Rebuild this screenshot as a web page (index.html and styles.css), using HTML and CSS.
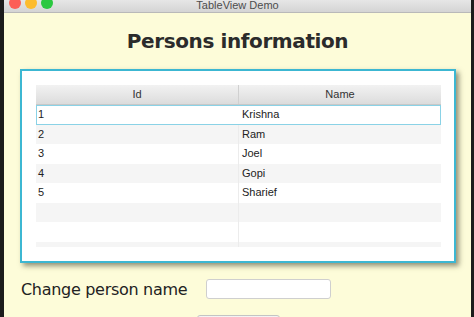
FILE: index.html
```html
<!DOCTYPE html>
<html lang="en">
<head>
    <meta charset="UTF-8">
    <title>TableView Demo</title>
    <link rel="stylesheet" href="styles.css">
</head>
<body>
    <div class="window">
        <div class="titlebar">
            <div class="lights">
                <span class="light red"></span>
                <span class="light yellow"></span>
                <span class="light green"></span>
            </div>
            <div class="title">TableView Demo</div>
        </div>

        <div class="content">
            <h1>Persons information</h1>

            <div class="panel">
                <div class="table">
                    <div class="row head">
                        <div class="cell">Id</div>
                        <div class="cell">Name</div>
                    </div>
                    <div class="body">
                        <div class="row selected">
                            <div class="cell">1</div>
                            <div class="cell">Krishna</div>
                        </div>
                        <div class="row">
                            <div class="cell">2</div>
                            <div class="cell">Ram</div>
                        </div>
                        <div class="row">
                            <div class="cell">3</div>
                            <div class="cell">Joel</div>
                        </div>
                        <div class="row">
                            <div class="cell">4</div>
                            <div class="cell">Gopi</div>
                        </div>
                        <div class="row">
                            <div class="cell">5</div>
                            <div class="cell">Sharief</div>
                        </div>
                        <div class="row empty">
                            <div class="cell"></div>
                            <div class="cell"></div>
                        </div>
                        <div class="row empty">
                            <div class="cell"></div>
                            <div class="cell"></div>
                        </div>
                        <div class="row empty">
                            <div class="cell"></div>
                            <div class="cell"></div>
                        </div>
                    </div>
                </div>
            </div>

            <div class="form-row">
                <label for="person-name">Change person name</label>
                <input type="text" id="person-name">
            </div>

            <div class="buttons">
                <button aria-label="Update"></button>
            </div>
        </div>
    </div>
</body>
</html>
```

FILE: styles.css
```css
body {
    margin: 0;
    background-color: #1c1c1c;
    height: 317px;
    overflow: hidden;
}

.window {
    margin: 0 3px 0 4px;
    height: 317px;
    background: #fdfcd9;
    overflow: hidden;
}

.titlebar {
    position: relative;
    height: 12px;
    background: linear-gradient(#e6e6e6, #d4d4d4);
    border-bottom: 1px solid #b9b9b9;
}

.lights {
    position: absolute;
    left: 5px;
    top: -3px;
    display: flex;
    gap: 4px;
}

.light {
    width: 12px;
    height: 12px;
    border-radius: 50%;
}

.red { background: #fc5f57; }
.yellow { background: #fdbc2e; }
.green { background: #2bc840; }

.title {
    text-align: center;
    font-family: "Liberation Sans", Arial, sans-serif;
    font-size: 11px;
    line-height: 10px;
    color: #4d4d4d;
}

.content {
    padding-top: 16px;
}

h1 {
    margin: 0;
    text-align: center;
    font-family: "DejaVu Sans", Verdana, sans-serif;
    font-weight: bold;
    font-size: 20px;
    letter-spacing: -0.4px;
    line-height: 24px;
    color: #2b2b2b;
}

.panel {
    width: 405px;
    margin: 16px 0 0 16px;
    padding: 14px 13px 14px 14px;
    background: #fff;
    border: 2px solid #3cb7d2;
    box-shadow: 3px 3px 5px rgba(60, 60, 40, 0.55);
}

.table {
    font-family: "Liberation Sans", Arial, sans-serif;
    font-size: 11px;
    color: #222;
}

.row {
    display: grid;
    grid-template-columns: 202px 203px;
    height: 19.5px;
    line-height: 19px;
    box-sizing: border-box;
}

.row .cell {
    padding-left: 2px;
    white-space: nowrap;
}

.row .cell + .cell {
    border-left: 1px solid #ececec;
    padding-left: 3px;
}

.row.head {
    height: 20px;
    background: linear-gradient(#f2f2f2, #dcdcdc);
    border-bottom: 1px solid #c8c8c8;
    color: #333;
}

.row.head .cell {
    text-align: center;
    padding-left: 0;
}

.row.head .cell + .cell {
    border-left: 1px solid #d0d0d0;
}

.body {
    height: 142px;
    overflow: hidden;
}

.body .row:nth-child(even) {
    background: #f5f5f5;
}

.row.selected {
    border: 1px solid #8ad2e6;
    line-height: 17px;
}

.row.selected .cell {
    padding-left: 1px;
}

.row.selected .cell + .cell {
    border-left: none;
    padding-left: 3px;
}

.form-row {
    display: flex;
    align-items: center;
    margin: 16px 0 0 17px;
}

label {
    font-family: "DejaVu Sans", Verdana, sans-serif;
    font-size: 16px;
    letter-spacing: -0.3px;
    color: #222;
    width: 185px;
}

input {
    width: 125px;
    height: 20px;
    box-sizing: border-box;
    border: 1px solid #cfcfcf;
    border-radius: 3px;
    background: #fff;
    padding: 0 4px;
}

.buttons {
    margin: 16px 0 0 193px;
}

button {
    display: block;
    width: 83px;
    height: 24px;
    border: 1px solid #c4c4c4;
    border-radius: 3px;
    background: linear-gradient(#f4f4f4, #dedede);
}
```
